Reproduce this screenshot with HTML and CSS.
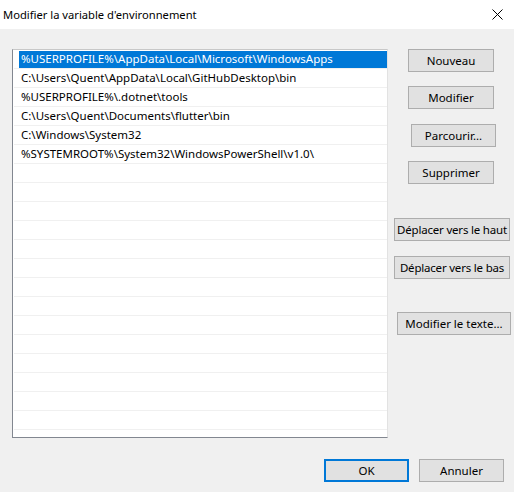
FILE: index.html
```html
<!DOCTYPE html>
<html lang="fr">
<head>
<meta charset="utf-8">
<title>Modifier la variable d'environnement</title>
<link rel="stylesheet" href="styles.css">
</head>
<body>
<div class="dialog">
  <div class="titlebar">
    <span class="title">Modifier la variable d'environnement</span>
    <span class="close"><svg width="11" height="11" viewBox="0 0 11 11"><path d="M0.5 0.5 L10.5 10.5 M10.5 0.5 L0.5 10.5" stroke="#000" stroke-width="1" fill="none"/></svg></span>
  </div>
  <div class="content">
    <div class="main">
      <div class="list">
        <div class="row selected"><span class="cell">%USERPROFILE%\AppData\Local\Microsoft\WindowsApps</span></div>
        <div class="row"><span class="cell">C:\Users\Quent\AppData\Local\GitHubDesktop\bin</span></div>
        <div class="row"><span class="cell">%USERPROFILE%\.dotnet\tools</span></div>
        <div class="row"><span class="cell">C:\Users\Quent\Documents\flutter\bin</span></div>
        <div class="row"><span class="cell">C:\Windows\System32</span></div>
        <div class="row"><span class="cell">%SYSTEMROOT%\System32\WindowsPowerShell\v1.0\</span></div>
        <div class="row"></div><div class="row"></div><div class="row"></div><div class="row"></div>
        <div class="row"></div><div class="row"></div><div class="row"></div><div class="row"></div>
        <div class="row"></div><div class="row"></div><div class="row"></div><div class="row"></div>
        <div class="row"></div><div class="row"></div>
      </div>
      <div class="side">
        <button class="btn b-new">Nouveau</button>
        <button class="btn b-edit">Modifier</button>
        <button class="btn b-browse">Parcourir...</button>
        <button class="btn b-del">Supprimer</button>
        <button class="btn wide b-up">Déplacer vers le haut</button>
        <button class="btn wide b-down">Déplacer vers le bas</button>
        <button class="btn wide b-text">Modifier le texte...</button>
      </div>
    </div>
    <div class="footer">
      <button class="btn ok">OK</button>
      <button class="btn cancel">Annuler</button>
    </div>
  </div>
</div>
</body>
</html>
```

FILE: styles.css
```css
* { box-sizing: border-box; }
html, body { margin: 0; padding: 0; }
body {
  width: 514px;
  height: 492px;
  background: #f0f0f0;
  font-family: "Noto Sans", "Open Sans", sans-serif;
  font-size: 11.5px;
  color: #000;
  overflow: hidden;
}
.dialog { width: 514px; height: 492px; display: flex; flex-direction: column; }
.titlebar {
  height: 29px;
  background: #fff;
  display: flex;
  align-items: center;
  justify-content: space-between;
  padding: 0 11px 1px 3px;
}
.title { font-size: 11.2px; }
.close { display: flex; width: 11px; height: 11px; }
.content { flex: 1; display: flex; flex-direction: column; }
.main { display: flex; padding: 20px 0 0 12px; }
.list {
  width: 376px;
  height: 389px;
  background: #fff;
  border: 1px solid #828790;
  border-top-color: #c8c8c8;
  border-right-color: #e2e2e2;
  padding-left: 1px;
}
.row {
  height: 19px;
  border-bottom: 1px solid #f0f0f0;
  padding: 1px 0 0 5px;
  display: flex;
}
.cell {
  display: block;
  width: 100%;
  height: 17px;
  line-height: 16px;
  padding-left: 2px;
  white-space: nowrap;
}
.selected .cell { background: #0078d7; color: #fff; }
.side { display: flex; flex-direction: column; align-items: flex-start; }
.btn {
  font-family: inherit;
  font-size: 11.5px;
  color: #000;
  background: #e1e1e1;
  border: 1px solid #adadad;
  height: 23px;
  padding: 0;
  margin: 0;
  border-radius: 0;
  white-space: nowrap;
}
.b-new { width: 86px; margin-left: 20px; }
.b-edit { width: 86px; margin-left: 20px; margin-top: 14px; }
.b-browse { width: 85px; margin-left: 23px; margin-top: 15px; }
.b-del { width: 86px; margin-left: 20px; margin-top: 14px; }
.wide { width: 116px; }
.b-up { margin-left: 6px; margin-top: 34px; letter-spacing: -0.2px; }
.b-down { margin-left: 6px; margin-top: 15px; letter-spacing: -0.2px; }
.b-text { width: 114px; margin-left: 9px; margin-top: 33px; }
.footer { display: flex; justify-content: flex-end; padding: 21px 10px 0 0; gap: 10px; }
.ok { width: 85px; border: 2px solid #0078d7; }
.cancel { width: 85px; }
```
